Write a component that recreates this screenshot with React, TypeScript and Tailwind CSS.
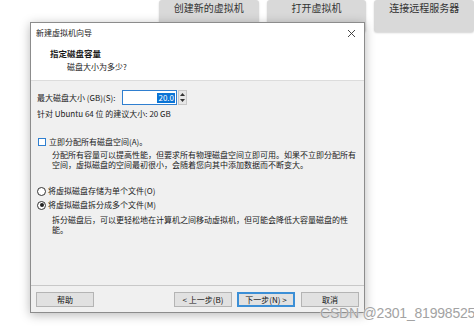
import React from "react";

const cjk = { fontFamily: '"Noto Sans CJK SC", "Noto Sans", sans-serif' };

function TopButton({ label, w }: { label: string; w: string }) {
  return (
    <div
      className={`${w} h-[32px] bg-[#d9d9d9] rounded-[3px] shadow-[0_1px_2px_rgba(0,0,0,0.18)] flex justify-center pt-[1px] text-[10px] leading-[14px] text-[#333]`}
    >
      {label}
    </div>
  );
}

function DlgButton({ label, primary }: { label: string; primary?: boolean }) {
  return (
    <div
      className={`w-[58px] h-[15px] flex items-center justify-center text-[8px] leading-none text-[#111] bg-[#e1e1e1] ${
        primary ? "border-2 border-[#3c8fd6]" : "border border-[#b4b4b4]"
      }`}
    >
      {label}
    </div>
  );
}

export default function App() {
  return (
    <div className="relative w-[474px] h-[327px] bg-white overflow-hidden" style={cjk}>
      {/* background app buttons */}
      <div className="flex gap-[8px] pl-[159px]">
        <TopButton label="创建新的虚拟机" w="w-[107px]" />
        <TopButton label="打开虚拟机" w="w-[107px]" />
        <TopButton label="连接远程服务器" w="w-[107px]" />
      </div>

      {/* dialog window */}
      <div className="absolute left-[30px] top-[22px] w-[335px] h-[291px] flex flex-col border border-[#8c8c8c] bg-[#f0f0f0] shadow-[0_2px_10px_rgba(0,0,0,0.28)] text-[#1a1a1a]">
        <div className="bg-white flex flex-col border-b border-[#dcdcdc]">
          <div className="h-[20px] flex items-center justify-between pl-[5px] pr-[7px] text-[8px]">
            <span>新建虚拟机向导</span>
            <svg width="9" height="9" viewBox="0 0 9 9" className="mr-[1px]">
              <path d="M1 1L8 8M8 1L1 8" stroke="#333" strokeWidth="0.9" />
            </svg>
          </div>
          <div className="pt-[3px] pb-[6px] flex flex-col">
            <div className="pl-[19px] text-[8.5px] leading-[14px] font-bold">指定磁盘容量</div>
            <div className="pl-[36px] text-[8px] leading-[14px]">磁盘大小为多少?</div>
          </div>
        </div>

        <div className="flex-1 flex flex-col pl-[6px] pt-[9px] text-[8px]">
          <div className="flex items-center h-[15px]">
            <span className="w-[85px]">最大磁盘大小 (GB)(S):</span>
            <div className="w-[55px] h-[15px] border border-[#2f7fd0] bg-white flex items-center justify-end pr-[1px]">
              <span className="bg-[#0a74d6] text-white px-[1px] leading-[10px]">20.0</span>
            </div>
            <div className="w-[9px] h-[15px] ml-[1px] flex flex-col bg-[#e6e6e6] border border-[#c8c8c8]">
              <div className="flex-1 flex items-center justify-center">
                <svg width="5" height="3" viewBox="0 0 5 3"><path d="M0 3L2.5 0L5 3Z" fill="#333" /></svg>
              </div>
              <div className="flex-1 flex items-center justify-center">
                <svg width="5" height="3" viewBox="0 0 5 3"><path d="M0 0L2.5 3L5 0Z" fill="#333" /></svg>
              </div>
            </div>
          </div>
          <div className="mt-[3px] leading-[12px]">针对 Ubuntu 64 位 的建议大小: 20 GB</div>

          <div className="mt-[16px] flex items-center h-[12px]">
            <div className="w-[8px] h-[8px] border border-[#2f7fd0] bg-white ml-[1px] mr-[3px]" />
            <span>立即分配所有磁盘空间(A)。</span>
          </div>
          <div className="mt-[2px] pl-[15px] leading-[10px]">
            <div>分配所有容量可以提高性能，但要求所有物理磁盘空间立即可用。如果不立即分配所有</div>
            <div>空间，虚拟磁盘的空间最初很小，会随着您向其中添加数据而不断变大。</div>
          </div>

          <div className="mt-[14px] flex items-center h-[14px]">
            <div className="w-[9px] h-[9px] rounded-full border border-[#333] bg-white mr-[2px]" />
            <span>将虚拟磁盘存储为单个文件(O)</span>
          </div>
          <div className="flex items-center h-[14px]">
            <div className="w-[9px] h-[9px] rounded-full border border-[#333] bg-white mr-[2px] flex items-center justify-center">
              <div className="w-[4px] h-[4px] rounded-full bg-[#222]" />
            </div>
            <span>将虚拟磁盘拆分成多个文件(M)</span>
          </div>
          <div className="mt-[3px] pl-[15px] leading-[10px]">
            <div>拆分磁盘后，可以更轻松地在计算机之间移动虚拟机，但可能会降低大容量磁盘的性</div>
            <div>能。</div>
          </div>
        </div>

        <div className="h-[27px] border-t border-[#c8c8c8] flex items-start pt-[6px] pl-[5px]">
          <DlgButton label="帮助" />
          <div className="ml-[80px]">
            <DlgButton label="< 上一步(B)" />
          </div>
          <div className="ml-[5px]">
            <DlgButton label="下一步(N) >" primary />
          </div>
          <div className="ml-[6px]">
            <DlgButton label="取消" />
          </div>
        </div>
      </div>

      {/* watermark */}
      <div
        className="absolute left-[320px] top-[304px] whitespace-nowrap text-[14px] leading-[18px] text-[#a3a3a3] tracking-[-0.2px]"
        style={{ fontFamily: '"Liberation Sans", Arial, sans-serif', textShadow: "0 0 1px #fff" }}
      >
        CSDN @2301_81998525
      </div>
    </div>
  );
}
